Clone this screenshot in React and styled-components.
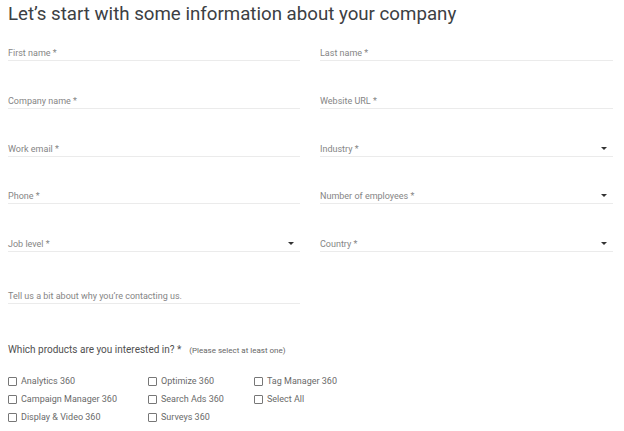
import React from 'react';
import styled, { createGlobalStyle } from 'styled-components';

const Global = createGlobalStyle`
  *, *::before, *::after {
    box-sizing: border-box;
  }
  body {
    margin: 0;
    background: #fff;
    font-family: Roboto, "Liberation Sans", sans-serif;
  }
`;

const Page = styled.div`
  padding: 0 11px 0 8px;
  width: 624px;
`;

const Title = styled.h1`
  margin: 0;
  font-family: Roboto, "Open Sans", sans-serif;
  font-weight: 400;
  font-size: 18.7px;
  line-height: 28px;
  color: #3c4043;
`;

const Fields = styled.div`
  margin-top: 11px;
  display: grid;
  grid-template-columns: 292px 293px;
  column-gap: 20px;
  row-gap: 25.75px;
`;

const Field = styled.div`
  position: relative;
  height: 22px;
  padding-top: 7px;
  border-bottom: 1px solid #ebebeb;
`;

const Label = styled.span`
  display: block;
  font-size: 9px;
  line-height: 14px;
  color: #858585;
`;

const Arrow = styled.span`
  position: absolute;
  right: 6px;
  top: 12px;
  width: 0;
  height: 0;
  border-left: 3px solid transparent;
  border-right: 3px solid transparent;
  border-top: 3px solid #333;
`;

const Message = styled.div`
  margin-top: 30px;
  width: 292px;
`;

const Question = styled.div`
  margin-top: 39px;
  font-size: 10px;
  line-height: 14px;
  color: #505050;
`;

const Hint = styled.span`
  font-size: 8px;
  color: #666;
  margin-left: 8px;
`;

const Options = styled.div`
  margin-top: 14px;
  display: grid;
  grid-template-columns: 140px 106px 140px;
  grid-auto-rows: 18px;
`;

const Option = styled.label`
  display: flex;
  align-items: center;
  gap: 4px;
  font-size: 9px;
  color: #6a6a6a;
`;

const Box = styled.span`
  width: 9px;
  height: 9px;
  border: 1px solid #777;
  border-radius: 1px;
`;

const fields = [
  ['First name *', false],
  ['Last name *', false],
  ['Company name *', false],
  ['Website URL *', false],
  ['Work email *', false],
  ['Industry *', true],
  ['Phone *', false],
  ['Number of employees *', true],
  ['Job level *', true],
  ['Country *', true],
];

const products = [
  'Analytics 360',
  'Optimize 360',
  'Tag Manager 360',
  'Campaign Manager 360',
  'Search Ads 360',
  'Select All',
  'Display & Video 360',
  'Surveys 360',
];

export default function App() {
  return (
    <Page>
      <Global />
      <Title>Let’s start with some information about your company</Title>
      <Fields>
        {fields.map(([label, select]) => (
          <Field key={label}>
            <Label>{label}</Label>
            {select && <Arrow />}
          </Field>
        ))}
      </Fields>
      <Message>
        <Field>
          <Label>Tell us a bit about why you’re contacting us.</Label>
        </Field>
      </Message>
      <Question>
        Which products are you interested in? *<Hint>(Please select at least one)</Hint>
      </Question>
      <Options>
        {products.map(p => (
          <Option key={p}>
            <Box />
            {p}
          </Option>
        ))}
      </Options>
    </Page>
  );
}
